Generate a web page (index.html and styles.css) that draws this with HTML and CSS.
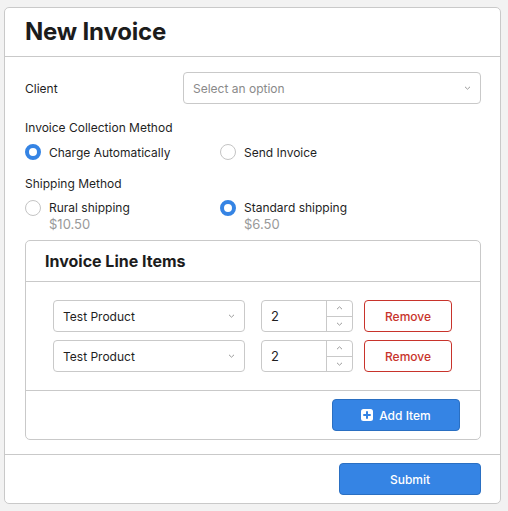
FILE: index.html
```html
<!DOCTYPE html>
<html lang="en">
<head>
<meta charset="utf-8">
<title>New Invoice</title>
<link rel="stylesheet" href="styles.css">
</head>
<body>
<form class="card">
  <div class="card-header"><h1 class="title">New Invoice</h1></div>
  <div class="card-body">
    <div class="field-row">
      <label class="field-label">Client</label>
      <div class="select select-client">
        <span class="placeholder">Select an option</span>
        <svg class="chev" width="7" height="4" viewBox="0 0 7 4"><path d="M1 .8l2.5 2.4L6 .8" fill="none" stroke="#9a9a9a" stroke-width="1"/></svg>
      </div>
    </div>

    <div class="group-label g1">Invoice Collection Method</div>
    <div class="radio-grid r1">
      <label class="radio"><span class="dot on"></span><span class="opt"><span class="opt-name">Charge Automatically</span></span></label>
      <label class="radio"><span class="dot"></span><span class="opt"><span class="opt-name">Send Invoice</span></span></label>
    </div>

    <div class="group-label g2">Shipping Method</div>
    <div class="radio-grid r2">
      <label class="radio"><span class="dot"></span><span class="opt"><span class="opt-name">Rural shipping</span><span class="price">$10.50</span></span></label>
      <label class="radio"><span class="dot on"></span><span class="opt"><span class="opt-name">Standard shipping</span><span class="price">$6.50</span></span></label>
    </div>

    <section class="sub-card">
      <div class="sub-header"><h2 class="sub-title">Invoice Line Items</h2></div>
      <div class="sub-body">
        <div class="line">
          <div class="select select-product">
            <span class="value">Test Product</span>
            <svg class="chev" width="7" height="4" viewBox="0 0 7 4"><path d="M1 .8l2.5 2.4L6 .8" fill="none" stroke="#9a9a9a" stroke-width="1"/></svg>
          </div>
          <div class="number">
            <span class="num-value">2</span>
            <div class="spin">
              <span class="spin-btn"><svg width="7" height="4" viewBox="0 0 7 4"><path d="M1 3.2L3.5 .8 6 3.2" fill="none" stroke="#9a9a9a" stroke-width="1"/></svg></span>
              <span class="spin-btn"><svg width="7" height="4" viewBox="0 0 7 4"><path d="M1 .8l2.5 2.4L6 .8" fill="none" stroke="#9a9a9a" stroke-width="1"/></svg></span>
            </div>
          </div>
          <button type="button" class="btn-remove">Remove</button>
        </div>
        <div class="line">
          <div class="select select-product">
            <span class="value">Test Product</span>
            <svg class="chev" width="7" height="4" viewBox="0 0 7 4"><path d="M1 .8l2.5 2.4L6 .8" fill="none" stroke="#9a9a9a" stroke-width="1"/></svg>
          </div>
          <div class="number">
            <span class="num-value">2</span>
            <div class="spin">
              <span class="spin-btn"><svg width="7" height="4" viewBox="0 0 7 4"><path d="M1 3.2L3.5 .8 6 3.2" fill="none" stroke="#9a9a9a" stroke-width="1"/></svg></span>
              <span class="spin-btn"><svg width="7" height="4" viewBox="0 0 7 4"><path d="M1 .8l2.5 2.4L6 .8" fill="none" stroke="#9a9a9a" stroke-width="1"/></svg></span>
            </div>
          </div>
          <button type="button" class="btn-remove">Remove</button>
        </div>
      </div>
      <div class="sub-footer">
        <button type="button" class="btn-primary btn-add">
          <svg class="plus" width="12" height="12" viewBox="0 0 12 12"><rect x="0" y="0" width="12" height="12" rx="2.5" fill="#fff"/><path d="M6 3v6M3 6h6" stroke="#3584e4" stroke-width="2" stroke-linecap="round"/></svg>
          <span>Add Item</span>
        </button>
      </div>
    </section>
  </div>
  <div class="card-footer">
    <button type="submit" class="btn-primary btn-submit">Submit</button>
  </div>
</form>
</body>
</html>
```

FILE: styles.css
```css
* { box-sizing: border-box; }
html, body { margin: 0; padding: 0; }
body {
  background: #f2f2f2;
  font-family: Inter, "Noto Sans", sans-serif;
  font-size: 12px;
  color: #1f1f1f;
  padding: 7px 0 0 4px;
}
.card {
  width: 497px;
  background: #fff;
  border: 1px solid #c9c9c9;
  border-radius: 5px;
}
.card-header {
  height: 49px;
  border-bottom: 1px solid #c9c9c9;
  padding: 0 20px;
  display: flex;
  align-items: center;
}
.title {
  margin: 0;
  font-size: 24px;
  font-weight: 700;
  color: #1c1c1c;
  letter-spacing: -0.2px;
  line-height: 1;
  margin-top: -1px;
}
.card-body {
  padding: 15px 19px 14px 20px;
}
.field-row {
  display: flex;
  align-items: center;
  height: 32px;
}
.field-label {
  width: 158px;
}
.select {
  height: 32px;
  border: 1px solid #c9c9c9;
  border-radius: 4px;
  display: flex;
  align-items: center;
  justify-content: space-between;
  padding: 0 9px 0 9px;
  background: #fff;
}
.select-client { flex: 1; }
.placeholder { color: #8a8a8a; }
.group-label {
  line-height: 20px;
}
.g1 { margin-top: 14px; }
.g2 { margin-top: 12px; }
.radio-grid {
  display: grid;
  grid-template-columns: 195px 195px;
}
.r1 { margin-top: 4px; }
.r2 { margin-top: 5px; }
.radio {
  display: flex;
  align-items: flex-start;
  gap: 8px;
}
.r1 .radio { align-items: center; height: 20px; }
.r2 .dot { margin-top: 1px; }
.dot {
  width: 16px;
  height: 16px;
  border-radius: 50%;
  border: 1px solid #c4c4c4;
  background: #fff;
  flex: none;
}
.dot.on {
  border: 4.5px solid #3584e4;
}
.opt { display: flex; flex-direction: column; }
.r2 .opt-name { line-height: 18px; }
.price {
  color: #999;
  line-height: 15px;
  font-size: 13px;
}
.sub-card {
  margin-top: 8px;
  border: 1px solid #c9c9c9;
  border-radius: 5px;
}
.sub-header {
  height: 41px;
  border-bottom: 1px solid #c9c9c9;
  padding: 0 19px;
  display: flex;
  align-items: center;
}
.sub-title {
  margin: 0;
  font-size: 16px;
  font-weight: 700;
  color: #1c1c1c;
}
.sub-body {
  padding: 18px 28px 18px 27px;
  display: flex;
  flex-direction: column;
  gap: 8px;
}
.line {
  display: flex;
  align-items: center;
}
.select-product { width: 192px; }
.number {
  margin-left: 16px;
  width: 92px;
  height: 32px;
  border: 1px solid #c9c9c9;
  border-radius: 4px;
  display: flex;
}
.num-value {
  flex: 1;
  padding-left: 9px;
  display: flex;
  align-items: center;
  font-size: 13px;
}
.spin {
  width: 26px;
  border-left: 1px solid #c9c9c9;
  display: flex;
  flex-direction: column;
}
.spin-btn {
  flex: 1;
  display: flex;
  align-items: center;
  justify-content: center;
}
.spin-btn + .spin-btn { border-top: 1px solid #c9c9c9; }
.btn-remove {
  margin-left: 11px;
  width: 88px;
  height: 32px;
  border: 1px solid #c8332b;
  border-radius: 4px;
  background: #fff;
  color: #c8332b;
  font: inherit;
  font-weight: 500;
  padding: 0;
}
.sub-footer {
  border-top: 1px solid #c9c9c9;
  padding: 8px 20px 8px 0;
  display: flex;
  justify-content: flex-end;
}
.btn-primary {
  height: 32px;
  border: 1px solid #2a6fc2;
  border-radius: 4px;
  background: #3584e4;
  color: #fff;
  font: inherit;
  font-weight: 500;
  display: flex;
  align-items: center;
  justify-content: center;
  gap: 6px;
  padding: 0;
}
.btn-add { width: 128px; }
.btn-submit { width: 142px; }
.card-footer {
  border-top: 1px solid #c9c9c9;
  padding: 8px 19px 8px 0;
  display: flex;
  justify-content: flex-end;
}
```
